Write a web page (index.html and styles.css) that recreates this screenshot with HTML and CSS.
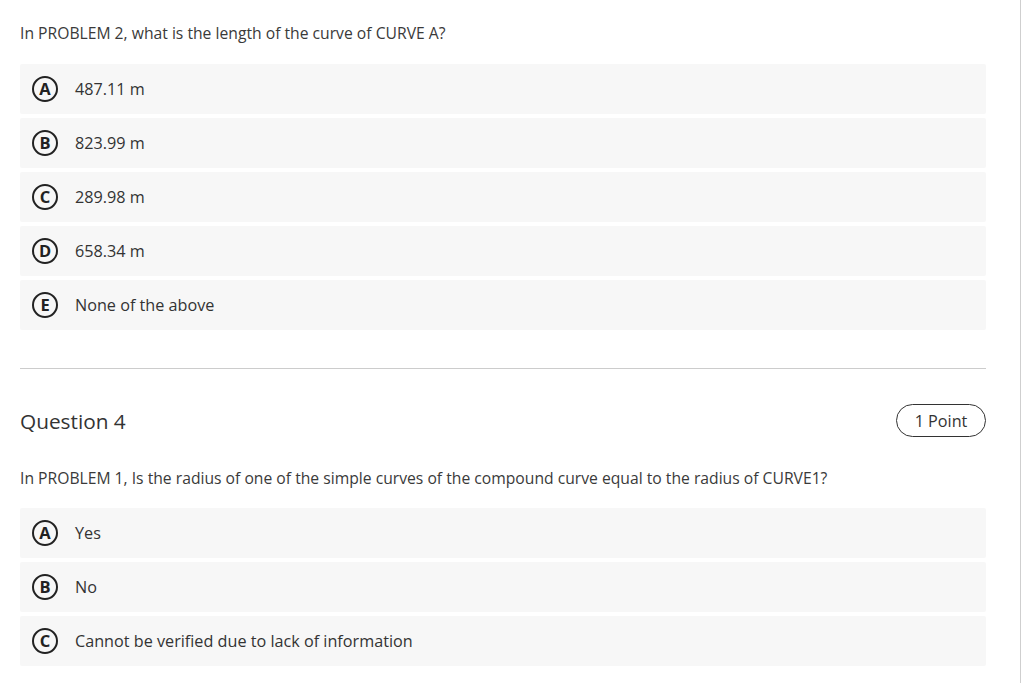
FILE: index.html
```html
<!DOCTYPE html>
<html>
<head>
<meta charset="utf-8">
<link rel="stylesheet" href="styles.css">
</head>
<body>
<div class="page">
  <section class="question">
    <p class="prompt">In PROBLEM 2, what is the length of the curve of CURVE A?</p>
    <ul class="options">
      <li class="option"><span class="badge">A</span><span class="label">487.11 m</span></li>
      <li class="option"><span class="badge">B</span><span class="label">823.99 m</span></li>
      <li class="option"><span class="badge">C</span><span class="label">289.98 m</span></li>
      <li class="option"><span class="badge">D</span><span class="label">658.34 m</span></li>
      <li class="option"><span class="badge">E</span><span class="label">None of the above</span></li>
    </ul>
  </section>
  <hr class="divider">
  <section class="question">
    <div class="q-head">
      <h2 class="q-title">Question 4</h2>
      <span class="points">1 Point</span>
    </div>
    <p class="prompt prompt-2">In PROBLEM 1, Is the radius of one of the simple curves of the compound curve equal to the radius of CURVE1?</p>
    <ul class="options options-2">
      <li class="option"><span class="badge">A</span><span class="label">Yes</span></li>
      <li class="option"><span class="badge">B</span><span class="label">No</span></li>
      <li class="option"><span class="badge">C</span><span class="label">Cannot be verified due to lack of information</span></li>
    </ul>
  </section>
</div>
</body>
</html>
```

FILE: styles.css
```css
html, body {
  margin: 0;
  padding: 0;
  background: #ffffff;
}
body {
  font-family: "Open Sans", "Liberation Sans", sans-serif;
  color: #333333;
  font-size: 15px;
}
.page {
  width: 966px;
  min-height: 683px;
  box-sizing: content-box;
  padding: 22px 34px 0 20px;
  border-right: 1px solid #cfcfcf;
}
.prompt {
  margin: 0;
  font-size: 15.7px;
  line-height: 22px;
  color: #3a3a3a;
}
.options {
  list-style: none;
  margin: 20px 0 0;
  padding: 0;
  display: flex;
  flex-direction: column;
  gap: 4px;
}
.option {
  height: 50px;
  background: #f7f7f7;
  border-radius: 2px;
  display: flex;
  align-items: center;
  padding-left: 12px;
  gap: 17px;
}
.badge {
  box-sizing: border-box;
  width: 26px;
  height: 26px;
  border: 2px solid #222222;
  border-radius: 50%;
  display: flex;
  align-items: center;
  justify-content: center;
  font-size: 16.5px;
  font-weight: 700;
  color: #222222;
  line-height: 1;
}
.label {
  font-size: 16.2px;
  line-height: 22px;
  color: #333333;
}
.divider {
  margin: 38px 0 0;
  border: 0;
  border-top: 1px solid #cccccc;
  height: 0;
}
.q-head {
  margin-top: 35px;
  display: flex;
  align-items: center;
  justify-content: space-between;
  height: 33px;
}
.q-title {
  margin: 0;
  font-size: 20.8px;
  font-weight: 400;
  line-height: 26px;
}
.points {
  box-sizing: border-box;
  width: 90px;
  height: 33px;
  border: 1px solid #333333;
  border-radius: 17px;
  display: flex;
  align-items: center;
  justify-content: center;
  font-size: 16.2px;
}
.prompt-2 {
  margin-top: 30px;
}
.options-2 {
  margin-top: 19px;
}
```
